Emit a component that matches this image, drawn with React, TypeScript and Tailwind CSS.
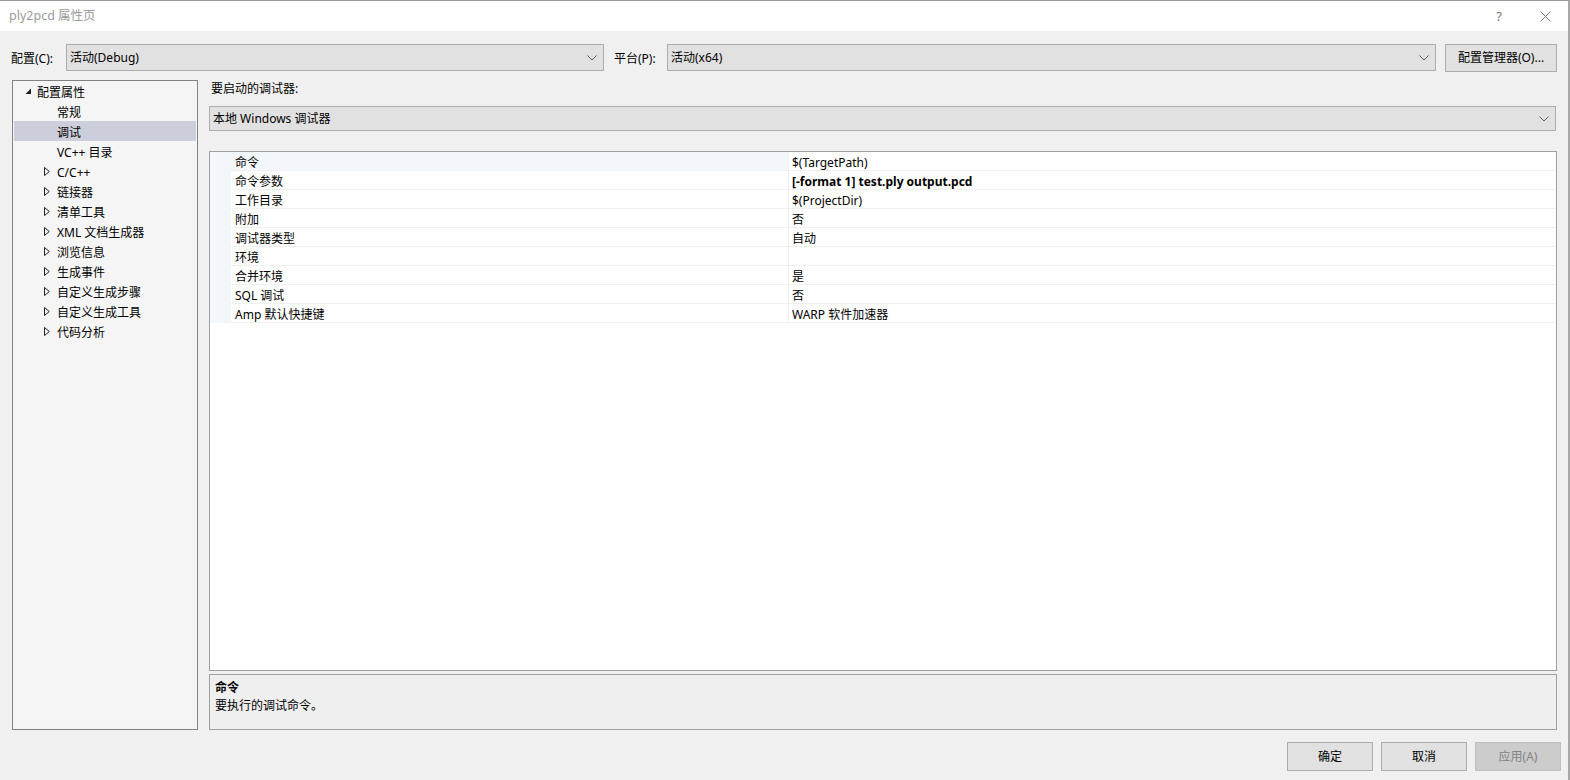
import React from 'react';

const font = { fontFamily: '"Noto Sans", "Noto Sans CJK SC", sans-serif' };

function Chevron() {
  return (
    <svg width="10" height="6" viewBox="0 0 10 6" className="shrink-0">
      <polyline points="0.5,0.5 5,5 9.5,0.5" fill="none" stroke="#606060" strokeWidth="1" />
    </svg>
  );
}

function Combo({ text, className }: { text: string; className: string }) {
  return (
    <div className={`flex items-center justify-between bg-[#e1e1e1] border border-[#adadad] pl-[3px] pr-[6px] ${className}`}>
      <span className="text-[12px] leading-none text-black">{text}</span>
      <Chevron />
    </div>
  );
}

function Arrow({ open }: { open?: boolean }) {
  if (open) {
    return (
      <svg width="7" height="7" viewBox="0 0 7 7">
        <polygon points="6,0.5 6,6 0.5,6" fill="#1e1e1e" />
      </svg>
    );
  }
  return (
    <svg width="6" height="9" viewBox="0 0 6 9">
      <polygon points="0.5,0.5 5.3,4.5 0.5,8.5" fill="none" stroke="#1e1e1e" strokeWidth="1" />
    </svg>
  );
}

const tree: { label: string; level: number; arrow?: 'open' | 'closed'; selected?: boolean }[] = [
  { label: '配置属性', level: 0, arrow: 'open' },
  { label: '常规', level: 1 },
  { label: '调试', level: 1, selected: true },
  { label: 'VC++ 目录', level: 1 },
  { label: 'C/C++', level: 1, arrow: 'closed' },
  { label: '链接器', level: 1, arrow: 'closed' },
  { label: '清单工具', level: 1, arrow: 'closed' },
  { label: 'XML 文档生成器', level: 1, arrow: 'closed' },
  { label: '浏览信息', level: 1, arrow: 'closed' },
  { label: '生成事件', level: 1, arrow: 'closed' },
  { label: '自定义生成步骤', level: 1, arrow: 'closed' },
  { label: '自定义生成工具', level: 1, arrow: 'closed' },
  { label: '代码分析', level: 1, arrow: 'closed' },
];

const props: { name: string; value: string; bold?: boolean }[] = [
  { name: '命令', value: '$(TargetPath)' },
  { name: '命令参数', value: '[-format 1] test.ply output.pcd', bold: true },
  { name: '工作目录', value: '$(ProjectDir)' },
  { name: '附加', value: '否' },
  { name: '调试器类型', value: '自动' },
  { name: '环境', value: '' },
  { name: '合并环境', value: '是' },
  { name: 'SQL 调试', value: '否' },
  { name: 'Amp 默认快捷键', value: 'WARP 软件加速器' },
];

function Button({ label, disabled }: { label: string; disabled?: boolean }) {
  return (
    <div
      className={`w-[86px] h-[29px] flex items-center justify-center border text-[12px] leading-none ${
        disabled ? 'bg-[#cccccc] border-[#bfbfbf] text-[#838383]' : 'bg-[#e1e1e1] border-[#adadad] text-black'
      }`}
    >
      {label}
    </div>
  );
}

export default function App() {
  return (
    <div style={font} className="w-[1570px] h-[780px] bg-[#f0f0f0] border-t border-t-[#9a9a9a] border-r-2 border-r-[#a8a8a8] flex flex-col overflow-hidden text-black">
      {/* title bar */}
      <div className="h-[30px] bg-white flex items-center justify-between pl-[9px] shrink-0">
        <span className="text-[12.5px] leading-none text-[#9a9a9a]">ply2pcd 属性页</span>
        <div className="flex items-center">
          <span className="w-[46px] text-center text-[13px] leading-none text-[#777]">?</span>
          <div className="w-[46px] flex justify-center">
            <svg width="11" height="11" viewBox="0 0 11 11">
              <path d="M0.5 0.5 L10.5 10.5 M10.5 0.5 L0.5 10.5" stroke="#777" strokeWidth="1" />
            </svg>
          </div>
        </div>
      </div>

      {/* config row */}
      <div className="mt-[13px] h-[27px] flex items-center pl-[11px] shrink-0">
        <span className="text-[12px] leading-none w-[55px] pt-[2px]">配置(C):</span>
        <Combo text="活动(Debug)" className="w-[538px] h-[27px]" />
        <span className="text-[12px] leading-none ml-[10px] w-[53px] pt-[2px]">平台(P):</span>
        <Combo text="活动(x64)" className="w-[769px] h-[27px]" />
        <div className="ml-[9px] w-[112px] h-[28px] bg-[#e1e1e1] border border-[#adadad] flex items-center justify-center text-[12px] leading-none">
          配置管理器(O)...
        </div>
      </div>

      {/* main */}
      <div className="mt-[9px] flex pl-[12px] shrink-0">
        <div className="w-[186px] h-[650px] bg-[#f5f5f5] border border-[#828282] px-px">
          {tree.map((t) => (
            <div
              key={t.label}
              className={`h-[20px] flex items-center pt-[3px] ${t.selected ? 'bg-[#cccedb]' : ''}`}
            >
              <div className={`flex items-center justify-center w-[10px] -mt-[2px] ${t.level === 0 ? 'ml-[9px]' : 'ml-[28px]'}`}>
                {t.arrow && <Arrow open={t.arrow === 'open'} />}
              </div>
              <span className={`text-[12px] leading-none ${t.level === 0 ? 'ml-[4px]' : 'ml-[5px]'}`}>{t.label}</span>
            </div>
          ))}
        </div>

        <div className="ml-[11px] w-[1348px] flex flex-col h-[650px]">
          <div className="h-[17px] flex items-center pl-[2px]">
            <span className="text-[12px] leading-none">要启动的调试器:</span>
          </div>
          <Combo text="本地 Windows 调试器" className="mt-[9px] w-[1347px] h-[25px]" />

          <div className="mt-[20px] h-[520px] bg-white border border-[#a0a0a0]">
            {props.map((p, i) => (
              <div key={p.name} className="h-[19px] flex">
                <div className="w-[21px] bg-[#f3f6fb]" />
                <div
                  className={`w-[557px] flex items-center pl-[4px] pt-[4px] border-b border-[#f0f0f0] ${
                    i === 0 ? 'bg-[#f3f6fb]' : ''
                  }`}
                >
                  <span className="text-[12px] leading-none">{p.name}</span>
                </div>
                <div className="flex-1 flex items-center pl-[3px] pt-[4px] border-l border-l-[#f0f0f0] border-b border-b-[#f0f0f0]">
                  <span className={`text-[12px] leading-none ${p.bold ? 'font-bold' : ''}`}>{p.value}</span>
                </div>
              </div>
            ))}
          </div>

          <div className="mt-[3px] h-[56px] bg-[#efefef] border border-[#a0a0a0] pl-[5px] pt-[4px] flex flex-col">
            <span className="text-[12px] leading-[18px] font-bold">命令</span>
            <span className="text-[12px] leading-[18px]">要执行的调试命令。</span>
          </div>
        </div>
      </div>

      {/* buttons */}
      <div className="mt-[12px] flex justify-end gap-[8px] pr-[7px] shrink-0">
        <Button label="确定" />
        <Button label="取消" />
        <Button label="应用(A)" disabled />
      </div>
    </div>
  );
}
